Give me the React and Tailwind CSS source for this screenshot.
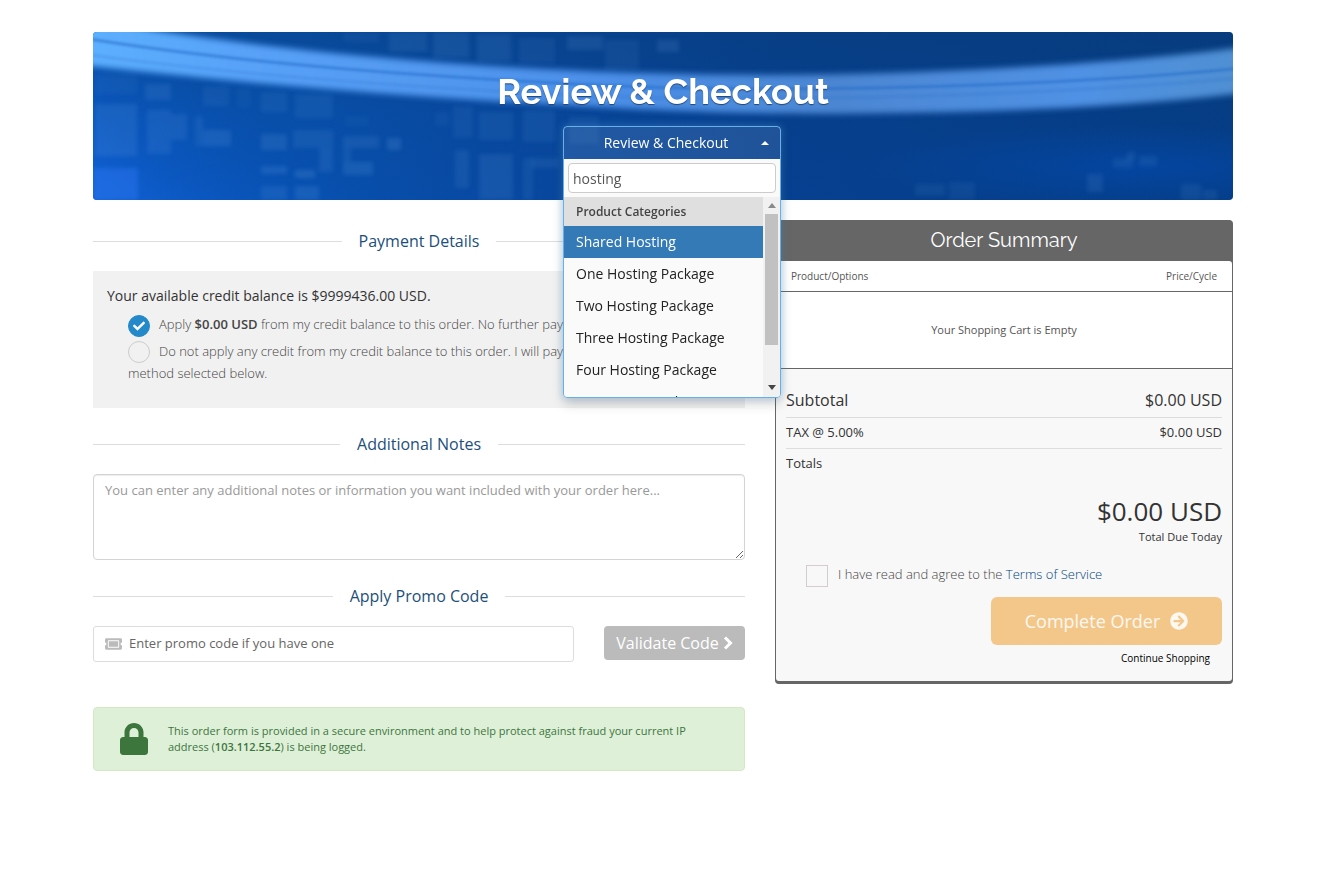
import { useState } from 'react';
import { FaArrowCircleRight, FaCheck, FaLock, FaTicketAlt } from 'react-icons/fa';

const categories = [
  'Shared Hosting',
  'One Hosting Package',
  'Two Hosting Package',
  'Three Hosting Package',
  'Four Hosting Package',
  'Six Hosting Package',
];

// x, y, width, height, opacity
const tiles = [
  [2, 72, 42, 52, 0.13],
  [2, 42, 42, 20, 0.06],
  [52, 52, 26, 16, 0.12],
  [54, 78, 24, 44, 0.12],
  [78, 82, 16, 26, 0.12],
  [102, 84, 8, 30, 0.1],
  [110, 98, 28, 16, 0.14],
  [110, 54, 26, 20, 0.08],
  [144, 56, 14, 20, 0.05],
  [168, 60, 26, 20, 0.09],
  [202, 62, 38, 24, 0.09],
  [252, 84, 24, 10, 0.05],
  [168, 102, 26, 16, 0.14],
  [200, 98, 40, 18, 0.11],
  [226, 116, 14, 24, 0.12],
  [250, 104, 36, 12, 0.12],
  [250, 116, 8, 14, 0.1],
  [294, 106, 14, 12, 0.16],
  [250, 130, 30, 13, 0.15],
  [168, 134, 26, 8, 0.15],
  [202, 138, 20, 8, 0.17],
  [168, 154, 26, 14, 0.12],
  [202, 154, 24, 14, 0.14],
  [250, 0, 36, 10, 0.06],
  [296, 0, 38, 20, 0.1],
  [340, 0, 36, 26, 0.11],
  [384, 2, 34, 28, 0.11],
  [426, 6, 36, 26, 0.08],
  [342, 80, 14, 14, 0.06],
  [360, 74, 20, 32, 0.08],
  [386, 80, 34, 28, 0.09],
  [362, 118, 14, 38, 0.11],
  [386, 122, 34, 46, 0.12],
  [430, 78, 32, 32, 0.09],
  [430, 126, 10, 42, 0.09],
  [438, 126, 28, 10, 0.1],
  [476, 84, 30, 28, 0.07],
  [474, 4, 36, 14, 0.12],
  [512, 8, 34, 30, 0.08],
  [564, 8, 22, 12, 0.13],
  [822, 152, 30, 12, 0.09],
  [856, 150, 26, 18, 0.08],
  [994, 142, 16, 18, 0.12],
  [1020, 126, 20, 10, 0.1],
  [1034, 120, 8, 8, 0.12],
  [1046, 124, 18, 10, 0.1],
  [1088, 152, 20, 16, 0.1],
  [1110, 158, 14, 10, 0.1],
];

function BannerArt() {
  return (
    <svg
      className="absolute inset-0 h-full w-full"
      viewBox="0 0 1140 168"
      preserveAspectRatio="none"
      aria-hidden="true"
    >
      <defs>
        <linearGradient id="base" x1="0" y1="0" x2="1" y2="0">
          <stop offset="0" stopColor="#0a56b8" />
          <stop offset="0.2" stopColor="#0850ae" />
          <stop offset="0.38" stopColor="#0848a0" />
          <stop offset="0.6" stopColor="#064090" />
          <stop offset="1" stopColor="#053d86" />
        </linearGradient>
        <linearGradient id="topShade" x1="0" y1="0" x2="0" y2="1">
          <stop offset="0" stopColor="#0a3c70" stopOpacity="0.35" />
          <stop offset="0.5" stopColor="#0a3c70" stopOpacity="0.1" />
          <stop offset="1" stopColor="#0a3c70" stopOpacity="0" />
        </linearGradient>
        <linearGradient id="lowLeft" gradientUnits="userSpaceOnUse" x1="0" y1="168" x2="90" y2="30">
          <stop offset="0" stopColor="#1464dc" stopOpacity="0.9" />
          <stop offset="0.5" stopColor="#0c5aca" stopOpacity="0.45" />
          <stop offset="1" stopColor="#0a55bd" stopOpacity="0" />
        </linearGradient>
        <linearGradient id="leftFade" x1="0" y1="0" x2="1" y2="0">
          <stop offset="0" stopColor="#fff" />
          <stop offset="0.3" stopColor="#888" />
          <stop offset="0.45" stopColor="#000" />
        </linearGradient>
        <mask id="leftMask">
          <rect width="1140" height="168" fill="url(#leftFade)" />
        </mask>
        <radialGradient id="glow" cx="0.92" cy="0.8" r="0.25">
          <stop offset="0" stopColor="#0447a6" stopOpacity="0.8" />
          <stop offset="1" stopColor="#0447a6" stopOpacity="0" />
        </radialGradient>
        <linearGradient id="band" x1="0" y1="0" x2="1" y2="0">
          <stop offset="0" stopColor="#5cb0ff" />
          <stop offset="0.15" stopColor="#58a2f8" />
          <stop offset="0.45" stopColor="#4c8fe8" />
          <stop offset="0.65" stopColor="#4c86d2" />
          <stop offset="0.85" stopColor="#5091e4" />
          <stop offset="1" stopColor="#508fd0" />
        </linearGradient>
        <filter id="soft" x="-5%" y="-20%" width="110%" height="140%">
          <feGaussianBlur stdDeviation="3" />
        </filter>
        <filter id="softer" x="-20%" y="-20%" width="140%" height="140%">
          <feGaussianBlur stdDeviation="2" />
        </filter>
        <filter id="streak" x="-5%" y="-30%" width="110%" height="160%">
          <feGaussianBlur stdDeviation="1" />
        </filter>
      </defs>
      <rect width="1140" height="168" fill="url(#base)" />
      <rect width="1140" height="168" fill="url(#topShade)" />
      <rect width="1140" height="168" fill="url(#lowLeft)" mask="url(#leftMask)" />
      <rect width="1140" height="168" fill="url(#glow)" />
      <rect x="0" y="136" width="45" height="32" fill="#2b74ee" opacity="0.5" filter="url(#softer)" />
      <g fill="#7ab8f0" filter="url(#softer)">
        {tiles.map(([x, y, w, h, o]) => (
          <rect key={`${x}-${y}`} x={x} y={y} width={w} height={h} opacity={o} />
        ))}
      </g>
      <path
        d="M-20 -18 L60 -2 C200 20 340 32 470 38 C600 44 700 44 797 41 C920 37 1040 30 1160 14 L1160 60 C1040 74 920 80 797 81 C700 83 600 81 470 73 C300 64 140 50 -20 32 Z"
        fill="url(#band)"
        filter="url(#soft)"
      />
      <g fill="none" stroke="#2468c8" strokeWidth="3" filter="url(#streak)">
        <path d="M-10 6 C150 32 330 44 480 52 S900 60 1150 36" opacity="0.5" />
        <path d="M-10 22 C150 44 330 56 480 63 S900 68 1150 46" opacity="0.2" />
      </g>
    </svg>
  );
}

function CategorySelect() {
  const [query, setQuery] = useState('hosting');

  return (
    <div className="absolute left-0 top-0 z-10 w-[218px] rounded border border-[#66afe9] text-sm shadow-[0_0_8px_rgba(102,175,233,0.4),0_6px_12px_rgba(0,0,0,0.18)]">
      <button
        type="button"
        aria-expanded="true"
        className="flex h-8 w-full items-center bg-white/10 pr-[11px] text-white"
      >
        <span className="flex-1 pl-[7px]">Review &amp; Checkout</span>
        <span className="border-x-4 border-b-4 border-x-transparent border-b-white" />
      </button>
      <div className="rounded-b bg-[#fafafa]">
        <div className="p-1">
          <input
            type="text"
            aria-label="Search categories"
            value={query}
            onChange={(e) => setQuery(e.target.value)}
            className="block h-[30px] w-full rounded border border-[#ccc] bg-white px-1 text-[#555] outline-none"
          />
        </div>
        <div className="flex h-[200px] overflow-hidden rounded-b">
          <div className="min-w-0 flex-1 overflow-hidden">
            <p className="h-[29px] bg-[#dfdfdf] px-3 text-xs font-semibold leading-[29px] text-[#444]">
              Product Categories
            </p>
            <ul role="listbox" aria-label="Product Categories">
              {categories.map((c, i) => (
                <li
                  key={c}
                  role="option"
                  aria-selected={i === 0}
                  className={
                    i === 0
                      ? 'h-8 bg-[#337ab7] px-3 leading-8 text-white'
                      : 'h-8 px-3 leading-8 text-[#222]'
                  }
                >
                  {c}
                </li>
              ))}
            </ul>
          </div>
          <div className="flex w-[17px] flex-col items-center bg-[#f1f1f1]">
            <span className="my-[6px] border-x-4 border-b-[5px] border-x-transparent border-b-[#8a8a8a]" />
            <span className="h-[131px] w-[13px] bg-[#c1c1c1]" />
            <span className="mb-[7px] mt-auto border-x-4 border-t-[5px] border-x-transparent border-t-[#444]" />
          </div>
        </div>
      </div>
    </div>
  );
}

function SectionHeading({ children }) {
  return (
    <div className="flex h-6 items-center gap-[17px]">
      <span className="h-px flex-1 bg-[#ddd]" />
      <h2 className="text-base text-[#1c4f7c]">{children}</h2>
      <span className="h-px flex-1 bg-[#ddd]" />
    </div>
  );
}

function CreditOption({ id, checked, onChange, children }) {
  return (
    <div className="leading-[21px]">
      <span className="relative mr-[9px] inline-block size-[22px] align-middle">
        <input
          id={id}
          type="radio"
          name="credit"
          checked={checked}
          onChange={onChange}
          className="block size-[22px] appearance-none rounded-full border border-[#ccc] checked:border-[#2489c9] checked:bg-[#2489c9]"
        />
        {checked && <FaCheck className="pointer-events-none absolute left-[5px] top-[5px] size-3 text-white" />}
      </span>
      <label htmlFor={id}>{children}</label>
    </div>
  );
}

function OrderSummary() {
  return (
    <section className="rounded border border-b-[3px] border-[#666] bg-[#666]">
      <h2 className="h-10 text-center font-['Raleway','Lato',sans-serif] text-xl leading-[38px] text-white">
        Order Summary
      </h2>
      <div className="rounded-t-[3px] bg-white text-[#555]">
        <div className="flex h-[30px] items-center justify-between px-[15px] text-[10px]">
          <span>Product/Options</span>
          <span>Price/Cycle</span>
        </div>
        <p className="h-[78px] border-y border-[#666] text-center text-[11px] leading-[76px]">
          Your Shopping Cart is Empty
        </p>
      </div>
      <div className="rounded-b-[3px] bg-[#f8f8f8] px-[10px] pt-[14px] text-[#333]">
        <dl>
          <div className="flex h-[35px] items-center justify-between border-b border-[#ddd] text-base">
            <dt>Subtotal</dt>
            <dd>$0.00 USD</dd>
          </div>
          <div className="flex h-[31px] items-center justify-between border-b border-[#ddd] text-[13px]">
            <dt>TAX @ 5.00%</dt>
            <dd>$0.00 USD</dd>
          </div>
        </dl>
        <p className="text-[13px] leading-7">Totals</p>
        <p className="mt-[18px] text-right text-[26px] leading-8">$0.00 USD</p>
        <p className="text-right text-[11px] leading-5">Total Due Today</p>
        <div className="mt-[18px] flex gap-[10px] pl-5 text-[13px] font-light">
          <input
            id="tos"
            type="checkbox"
            className="size-[22px] appearance-none border border-[#d5cdc8] checked:bg-[#2489c9]"
          />
          <label htmlFor="tos" className="leading-[18px] text-[#444]">
            I have read and agree to the{' '}
            <a href="#tos" className="text-[#00457c]">
              Terms of Service
            </a>
          </label>
        </div>
        <div className="mt-[10px] flex flex-col items-end">
          <button
            type="button"
            disabled
            className="flex h-12 w-[231px] items-center justify-center gap-[10px] rounded-md bg-[#f3c78a] text-lg text-[#fdf8f0]"
          >
            Complete Order
            <FaArrowCircleRight aria-hidden="true" />
          </button>
          <a href="#shop" className="mb-[13px] px-3 pt-[3px] text-[10px] leading-5 text-black">
            Continue Shopping
          </a>
        </div>
      </div>
    </section>
  );
}

export default function App() {
  const [credit, setCredit] = useState('apply');

  return (
    <main className="mx-auto max-w-[1143px] pl-[3px] pt-8 font-['Open_Sans','Noto_Sans',sans-serif]">
      <header className="relative h-[168px] rounded">
        <div className="absolute inset-0 overflow-hidden rounded">
          <BannerArt />
        </div>
        <h1 className="relative pt-[35px] text-center font-['Raleway','Lato',sans-serif] text-4xl font-bold leading-[48px] text-white [text-shadow:0_1px_1px_#23456e]">
          Review &amp; Checkout
        </h1>
        <div className="relative mx-auto mt-[11px] w-[200px]">
          <CategorySelect />
        </div>
      </header>

      <div className="mt-5 grid grid-cols-[652fr_458fr] items-start gap-[30px]">
        <div className="min-w-0">
          <div className="pt-[9px]">
            <SectionHeading>Payment Details</SectionHeading>
          </div>
          <div className="mt-[18px] h-[137px] bg-[#f1f1f1] px-[14px] pt-[14px]">
            <p className="text-sm leading-[22px] text-[#333]">Your available credit balance is $9999436.00 USD.</p>
            <div className="mt-[7px] flex flex-col gap-1 px-[21px] text-[13px] font-light text-[#444]">
              <CreditOption id="credit-apply" checked={credit === 'apply'} onChange={() => setCredit('apply')}>
                Apply <b className="font-semibold">$0.00 USD</b> from my credit balance to this order. No further payment
                will be due.
              </CreditOption>
              <CreditOption id="credit-skip" checked={credit === 'skip'} onChange={() => setCredit('skip')}>
                Do not apply any credit from my credit balance to this order. I will pay using the payment method
                selected below.
              </CreditOption>
            </div>
          </div>

          <div className="mt-6">
            <SectionHeading>Additional Notes</SectionHeading>
          </div>
          <textarea
            aria-label="Additional Notes"
            placeholder="You can enter any additional notes or information you want included with your order here..."
            className="mt-[18px] block h-[86px] w-full rounded border border-[#d4d4d4] px-[11px] py-[5px] text-[13px] leading-5 shadow-[inset_0_1px_1px_rgba(0,0,0,0.075)] placeholder:text-[#999]"
          />

          <div className="mt-6">
            <SectionHeading>Apply Promo Code</SectionHeading>
          </div>
          <div className="mt-[18px] flex items-start gap-[30px]">
            <div className="flex h-9 flex-1 items-center gap-[7px] rounded-[3px] border border-[#ddd] pl-[11px]">
              <FaTicketAlt className="h-4 w-[17px] text-[#bbb]" aria-hidden="true" />
              <input
                type="text"
                aria-label="Promo code"
                placeholder="Enter promo code if you have one"
                className="min-w-0 flex-1 text-[13px] outline-none placeholder:text-[#666]"
              />
            </div>
            <button
              type="button"
              className="flex h-[34px] w-[141px] items-center justify-center gap-1 rounded bg-[#bbb] text-base text-white"
            >
              Validate Code
              <svg viewBox="0 0 10 14" className="h-[14px] w-[10px]" aria-hidden="true">
                <path d="M2 1.5 L7.5 7 L2 12.5" fill="none" stroke="currentColor" strokeWidth="3" />
              </svg>
            </button>
          </div>

          <div className="mt-[45px] flex h-16 items-center rounded border border-[#d3e9c3] bg-[#dff0d8] pl-[26px] pr-10 text-[#3c763d]">
            <FaLock className="h-8 w-7 shrink-0" aria-hidden="true" />
            <p className="ml-5 text-[11px] leading-4">
              This order form is provided in a secure environment and to help protect against fraud your current IP
              address (<b className="font-semibold">103.112.55.2</b>) is being logged.
            </p>
          </div>
        </div>

        <OrderSummary />
      </div>
    </main>
  );
}
